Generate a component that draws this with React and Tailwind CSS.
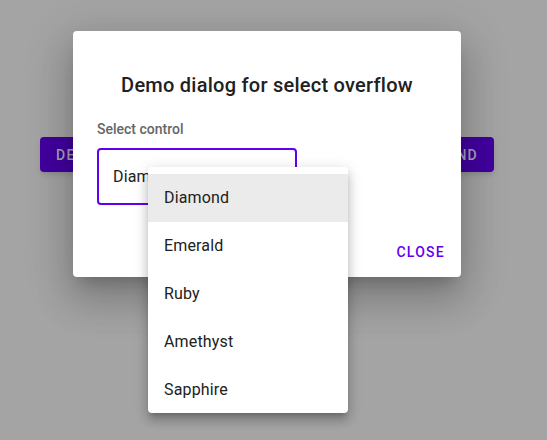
export default function App() {
  const gems = ['Diamond', 'Emerald', 'Ruby', 'Amethyst', 'Sapphire'];

  return (
    <div className="relative h-[440px] w-[547px] overflow-hidden bg-[#a4a4a4] font-['Roboto',sans-serif]">
      <div className="flex w-[494px] justify-between pl-[40px] pt-[137px]">
        <button type="button" className="h-[35px] rounded-[4px] bg-[#4200a0] px-4 text-sm font-medium tracking-[1.25px] text-[#a6a6b6] shadow-md">
          DEMO SELECT
        </button>
        <button type="button" className="h-[35px] rounded-[4px] bg-[#4200a0] px-4 text-sm font-medium tracking-[1.25px] text-[#a6a6b6] shadow-md">
          DEMO EXPAND
        </button>
      </div>

      {/* dialog */}
      <div className="absolute left-[73px] top-[31px] flex h-[246px] w-[388px] flex-col rounded-[4px] bg-white shadow-[0_11px_15px_-7px_rgba(0,0,0,0.2),0_24px_38px_3px_rgba(0,0,0,0.14),0_9px_46px_8px_rgba(0,0,0,0.12)]">
        <h2 className="pt-[38px] text-center text-[20px] font-medium leading-[32px] tracking-[0.25px] text-[#212121]">
          Demo dialog for select overflow
        </h2>
        <div className="px-6 pt-[18px]">
          <p className="text-sm font-medium leading-5 text-[#666666]">Select control</p>
          <div className="mt-[9px] flex h-[57px] w-[200px] items-center rounded-[4px] border-2 border-[#6200ee] px-[14px] text-base tracking-[0.15px] text-[#212121]">
            Diamond
          </div>
        </div>
        <div className="mt-auto flex justify-end px-2 pb-[7px]">
          <button type="button" className="h-9 px-2 text-sm font-medium tracking-[1.25px] text-[#6200ee]">
            CLOSE
          </button>
        </div>
      </div>

      {/* open select menu */}
      <div className="absolute left-[148px] top-[167px] h-[246px] w-[200px] overflow-hidden rounded-[4px] bg-white pt-[7px] shadow-[0_5px_5px_-3px_rgba(0,0,0,0.2),0_8px_10px_1px_rgba(0,0,0,0.14),0_3px_14px_2px_rgba(0,0,0,0.12)]">
        {gems.map((gem, index) => (
          <div
            key={gem}
            className={`flex h-12 items-center px-4 text-base tracking-[0.15px] text-[#212121] ${index === 0 ? 'bg-[#ebebeb]' : ''}`}
          >
            {gem}
          </div>
        ))}
      </div>
    </div>
  );
}
